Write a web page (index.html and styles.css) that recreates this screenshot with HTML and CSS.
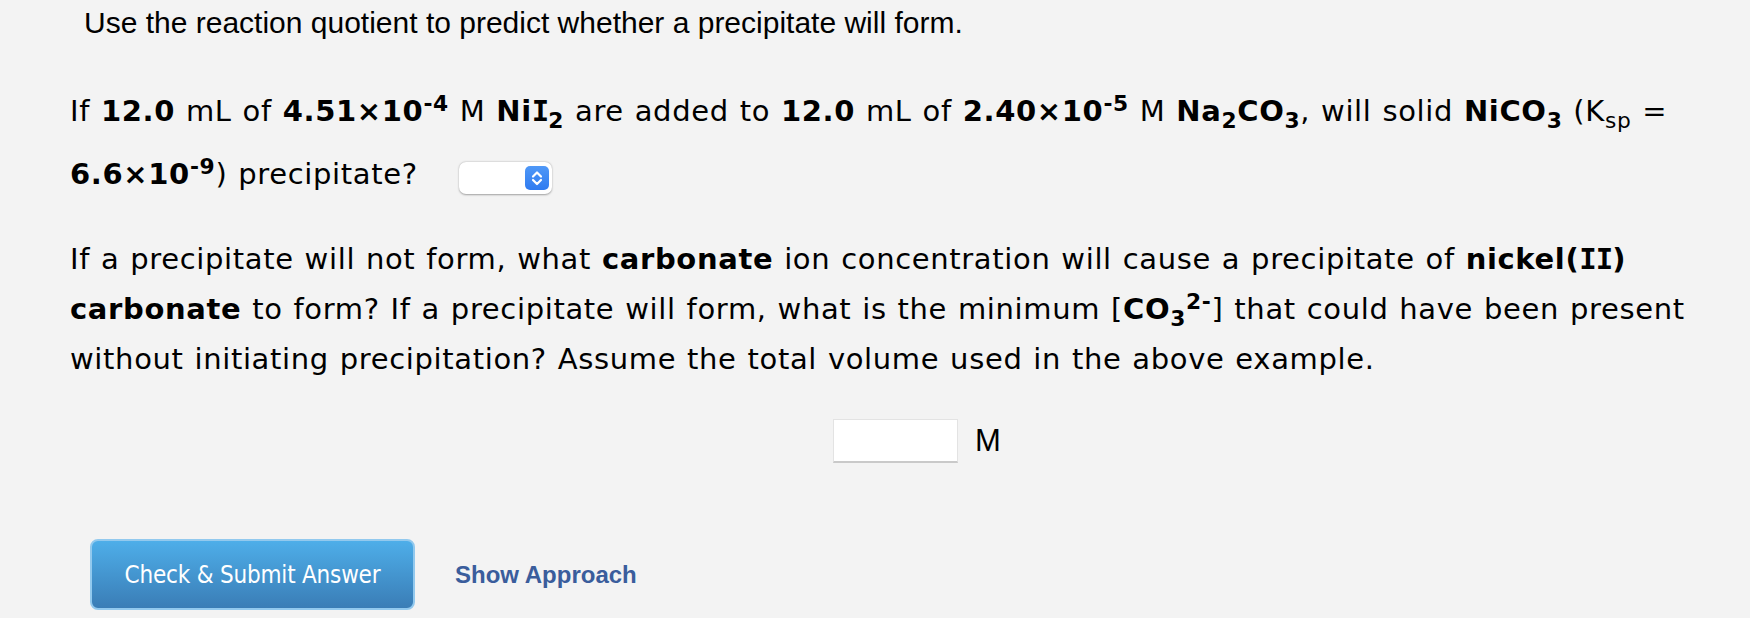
FILE: index.html
```html
<!DOCTYPE html>
<html>
<head>
<meta charset="utf-8">
<link rel="stylesheet" href="styles.css">
</head>
<body>
<div class="page">
  <div class="intro">Use the reaction quotient to predict whether a precipitate will form.</div>

  <p class="q q1">If <b>12.0</b> mL of <b>4.51×10<sup>-4</sup></b> M <b>Ni<span class="si">I</span><sub>2</sub></b> are added to <b>12.0</b> mL of <b>2.40×10<sup>-5</sup></b> M <b>Na<sub>2</sub>CO<sub>3</sub></b>, will solid <b>NiCO<sub>3</sub></b> (K<sub class="n">sp</sub> =<br><b>6.6×10<sup>-9</sup></b>) precipitate? <span class="select"><span class="arrows"><svg width="24" height="24" viewBox="0 0 24 24"><path d="M8 10.5 L12 6.5 L16 10.5" fill="none" stroke="#fff" stroke-width="2.2" stroke-linecap="round" stroke-linejoin="round"/><path d="M8 14 L12 18 L16 14" fill="none" stroke="#fff" stroke-width="2.2" stroke-linecap="round" stroke-linejoin="round"/></svg></span></span></p>

  <p class="q q2">If a precipitate will not form, what <b>carbonate</b> ion concentration will cause a precipitate of <b>nickel(<span class="si">II</span>)</b><br><b>carbonate</b> to form? If a precipitate will form, what is the minimum [<b>CO<sub>3</sub><sup>2-</sup></b>] that could have been present<br>without initiating precipitation? Assume the total volume used in the above example.</p>

  <div class="answer"><span class="field"></span><span class="unit">M</span></div>

  <div class="actions">
    <span class="btn">Check &amp; Submit Answer</span>
    <span class="link">Show Approach</span>
  </div>
</div>
</body>
</html>
```

FILE: styles.css
```css
html, body {
  margin: 0;
  padding: 0;
  background: #f3f3f3;
}
.page {
  width: 1750px;
  height: 618px;
  overflow: hidden;
  color: #000;
}
.intro {
  font-family: "Liberation Sans", Arial, sans-serif;
  font-size: 30px;
  line-height: 34px;
  padding: 6px 0 0 84px;
  white-space: nowrap;
}
.q {
  margin: 0;
  padding-left: 70px;
  font-family: "DejaVu Sans", Verdana, sans-serif;
  font-size: 29px;
  letter-spacing: 0.65px;
  word-spacing: 1px;
  white-space: nowrap;
}
.q b { font-weight: bold; }
.q .si {
  font-family: "DejaVu Sans Mono", monospace;
  letter-spacing: -1px;
}
.q sup, .q sub {
  font-size: 0.75em;
  line-height: 0;
}
.q sup { vertical-align: 0.45em; }
.q sub { vertical-align: -0.3em; }
.q1 {
  margin-top: 40px;
  line-height: 63px;
}
.q2 {
  margin-top: 28px;
  line-height: 50px;
}
.select {
  display: inline-flex;
  justify-content: flex-end;
  align-items: center;
  box-sizing: border-box;
  width: 93px;
  height: 32px;
  margin-left: 30px;
  padding-right: 3px;
  vertical-align: -6px;
  background: #fff;
  border-radius: 7px;
  box-shadow: 0 0.5px 2px rgba(0,0,0,0.35);
}
.arrows {
  display: flex;
  width: 24px;
  height: 24px;
  border-radius: 5px;
  background: linear-gradient(#4f98f7, #2f7bf0);
}
.answer {
  display: flex;
  align-items: center;
  margin-top: 35px;
  padding-left: 833px;
}
.field {
  box-sizing: border-box;
  width: 125px;
  height: 44px;
  background: #fff;
  border: 1px solid #e3e3e3;
  border-bottom: 2px solid #c9c9c9;
}
.unit {
  margin-left: 17px;
  font-family: "Liberation Sans", Arial, sans-serif;
  font-size: 31px;
}
.actions {
  display: flex;
  align-items: center;
  margin-top: 76px;
  padding-left: 90px;
}
.btn {
  box-sizing: border-box;
  display: flex;
  align-items: center;
  justify-content: center;
  width: 325px;
  height: 71px;
  border: 2px solid #92c9ee;
  border-radius: 8px;
  background: linear-gradient(#4eaee9, #3a7db6);
  color: #fff;
  font-family: "DejaVu Sans Condensed", "DejaVu Sans", sans-serif;
  font-size: 24px;
  letter-spacing: -0.2px;
}
.link {
  margin-left: 40px;
  font-family: "Liberation Sans", Arial, sans-serif;
  font-weight: bold;
  font-size: 24px;
  color: #3a5d9c;
}
```
